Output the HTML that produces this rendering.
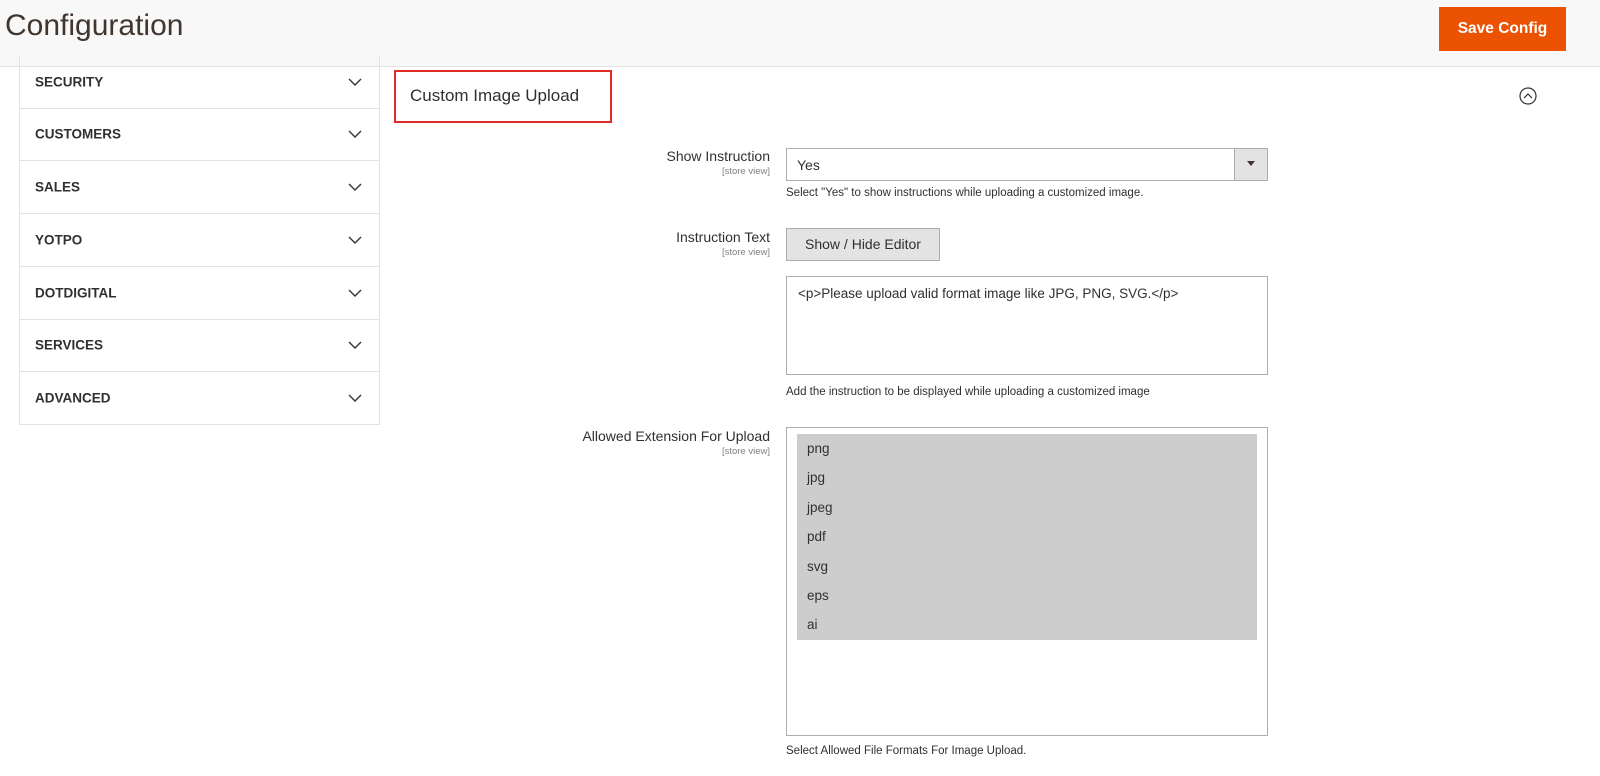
<!DOCTYPE html>
<html><head><style>
*{box-sizing:border-box;margin:0;padding:0}
body{width:1600px;height:776px;background:#fff;font-family:"Liberation Sans",sans-serif;color:#303030;position:relative;overflow:hidden}
.a{position:absolute}
.hdr{left:0;top:0;width:1600px;height:67px;background:#f8f8f8;border-bottom:1px solid #e3e3e3}
.side{left:19px;top:56px;width:361px;height:369px;border:1px solid #e3e3e3;border-top:none}
.row{position:absolute;left:0;width:359px;height:53px;border-bottom:1px solid #e3e3e3;font-weight:bold;font-size:13.5px;color:#303030}
.row span{position:absolute;left:15px;top:50%;transform:translateY(-50%)}
.row svg{position:absolute;left:328px;top:50%;margin-top:-4px}
.lbl{right:830px;text-align:right;font-size:14px;color:#303030}
.lbl small{display:block;font-size:9.5px;color:#808080;margin-top:2px}
.note{left:786px;font-size:11.5px;color:#303030}
.opt{position:absolute;left:10px;font-size:13.5px;color:#303030}
</style></head><body>
<div class="a hdr"></div>
<div class="a" style="left:5px;top:9px;font-size:30px;color:#41362f">Configuration</div>
<div class="a" style="left:1439px;top:7px;width:127px;height:44px;background:#eb5202;color:#fff;font-weight:bold;font-size:15.5px;text-align:center;line-height:44px">Save Config</div>

<div class="a side">
<div class="row" style="top:0"><span>SECURITY</span><svg width="14" height="8"><path d="M1 1l6 6 6-6" fill="none" stroke="#333" stroke-width="1.4"/></svg></div>
<div class="row" style="top:52px"><span>CUSTOMERS</span><svg width="14" height="8"><path d="M1 1l6 6 6-6" fill="none" stroke="#333" stroke-width="1.4"/></svg></div>
<div class="row" style="top:105px"><span>SALES</span><svg width="14" height="8"><path d="M1 1l6 6 6-6" fill="none" stroke="#333" stroke-width="1.4"/></svg></div>
<div class="row" style="top:158px"><span>YOTPO</span><svg width="14" height="8"><path d="M1 1l6 6 6-6" fill="none" stroke="#333" stroke-width="1.4"/></svg></div>
<div class="row" style="top:211px"><span>DOTDIGITAL</span><svg width="14" height="8"><path d="M1 1l6 6 6-6" fill="none" stroke="#333" stroke-width="1.4"/></svg></div>
<div class="row" style="top:263px"><span>SERVICES</span><svg width="14" height="8"><path d="M1 1l6 6 6-6" fill="none" stroke="#333" stroke-width="1.4"/></svg></div>
<div class="row" style="top:316px"><span>ADVANCED</span><svg width="14" height="8"><path d="M1 1l6 6 6-6" fill="none" stroke="#333" stroke-width="1.4"/></svg></div>
</div>

<div class="a" style="left:394px;top:70px;width:218px;height:53px;border:2px solid #e02b27"></div>
<div class="a" style="left:410px;top:86px;font-size:17px;color:#303030">Custom Image Upload</div>
<svg class="a" style="left:1519px;top:87px" width="18" height="18"><circle cx="9" cy="9" r="8" fill="none" stroke="#333" stroke-width="1.2"/><path d="M5 11l4-4 4 4" fill="none" stroke="#333" stroke-width="1.2"/></svg>

<div class="a lbl" style="top:148px;width:200px">Show Instruction<small>[store view]</small></div>
<div class="a" style="left:786px;top:148px;width:482px;height:33px;border:1px solid #adadad;font-size:14px;padding:8px 10px">Yes</div>
<div class="a" style="left:1234px;top:149px;width:33px;height:31px;background:#e3e3e3;border-left:1px solid #adadad"></div>
<svg class="a" style="left:1247px;top:161px" width="8" height="6"><path d="M0 0h8L4 5z" fill="#41362f"/></svg>
<div class="a note" style="top:187px">Select "Yes" to show instructions while uploading a customized image.</div>

<div class="a lbl" style="top:229px;width:200px">Instruction Text<small>[store view]</small></div>
<div class="a" style="left:786px;top:228px;width:154px;height:33px;background:#e3e3e3;border:1px solid #adadad;font-size:14px;text-align:center;line-height:31px">Show / Hide Editor</div>
<div class="a" style="left:786px;top:276px;width:482px;height:99px;border:1px solid #adadad;font-size:13.5px;padding:9px 11px">&lt;p&gt;Please upload valid format image like JPG, PNG, SVG.&lt;/p&gt;</div>
<div class="a note" style="top:386px">Add the instruction to be displayed while uploading a customized image</div>

<div class="a lbl" style="top:428px;width:260px">Allowed Extension For Upload<small>[store view]</small></div>
<div class="a" style="left:786px;top:427px;width:482px;height:309px;border:1px solid #adadad">
<div class="a" style="left:10px;top:6px;width:460px;height:206px;background:#cdcdcd">
<div class="opt" style="top:7px">png</div>
<div class="opt" style="top:36px">jpg</div>
<div class="opt" style="top:66px">jpeg</div>
<div class="opt" style="top:95px">pdf</div>
<div class="opt" style="top:125px">svg</div>
<div class="opt" style="top:154px">eps</div>
<div class="opt" style="top:183px">ai</div>
</div></div>
<div class="a note" style="top:745px">Select Allowed File Formats For Image Upload.</div>
</body></html>
